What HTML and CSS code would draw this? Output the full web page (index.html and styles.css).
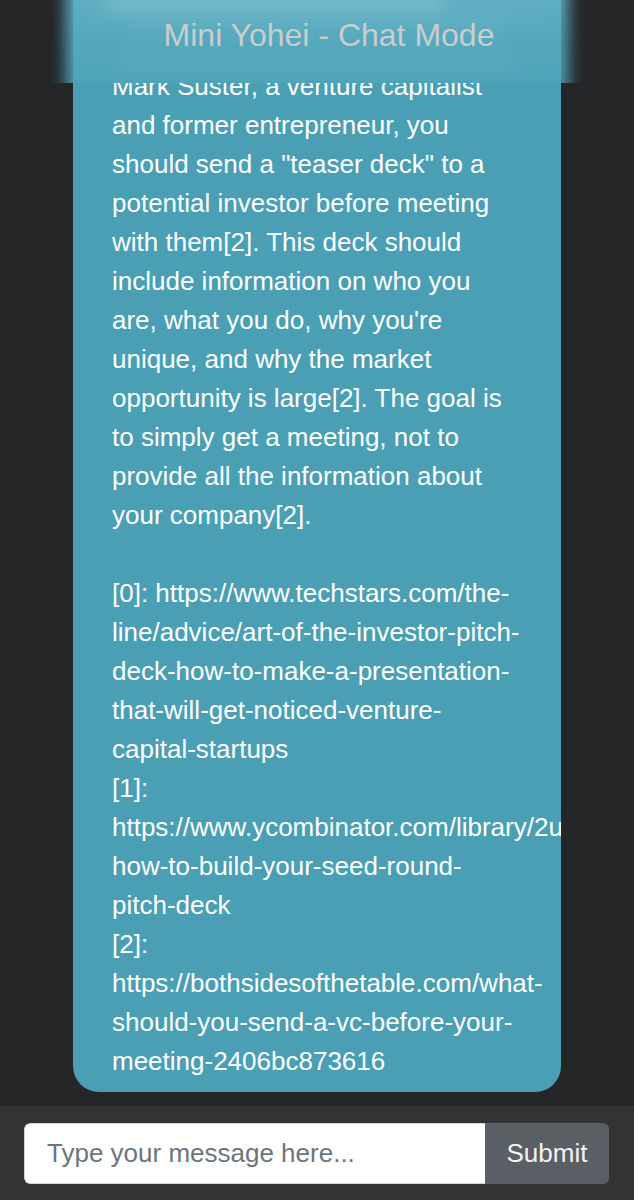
FILE: index.html
```html
<!DOCTYPE html>
<html lang="en">
<head>
<meta charset="utf-8">
<title>Mini Yohei - Chat Mode</title>
<link rel="stylesheet" href="styles.css">
</head>
<body>
<div class="app">
  <main class="chat">
    <div class="bubble"><div class="msg">Here are some tips for creating
a pitch deck for investors.
According to a blog post by
Mark Suster, a venture capitalist
and former entrepreneur, you
should send a "teaser deck" to a
potential investor before meeting
with them[2]. This deck should
include information on who you
are, what you do, why you're
unique, and why the market
opportunity is large[2]. The goal is
to simply get a meeting, not to
provide all the information about
your company[2].

[0]: https://www.techstars.com/the-
line/advice/art-of-the-investor-pitch-
deck-how-to-make-a-presentation-
that-will-get-noticed-venture-
capital-startups
[1]:
https://www.ycombinator.com/library/2u-
how-to-build-your-seed-round-
pitch-deck
[2]:
https://bothsidesofthetable.com/what-
should-you-send-a-vc-before-your-
meeting-2406bc873616</div></div>
  </main>
  <header class="topbar">
    <div class="topbar-blur">
      <span class="ghost g1"></span>
      <span class="ghost g2"></span>
      <span class="ghost g3"></span>
    </div>
    <h1 class="title">Mini Yohei - Chat Mode</h1>
  </header>
  <footer class="composer">
    <form class="input-group">
      <input class="field" type="text" placeholder="Type your message here...">
      <button class="submit" type="button">Submit</button>
    </form>
  </footer>
</div>
</body>
</html>
```

FILE: styles.css
```css
html, body {
  margin: 0;
  padding: 0;
  height: 100%;
}
body {
  background: #252628;
  font-family: "Liberation Sans", Arial, Helvetica, sans-serif;
  color: #ffffff;
}
.app {
  position: relative;
  height: 1200px;
  display: flex;
  flex-direction: column;
  overflow: hidden;
}
.chat {
  height: 1106px;
  flex: none;
  display: flex;
  flex-direction: column;
  justify-content: flex-end;
  align-items: center;
  overflow: hidden;
}
.bubble {
  flex: none;
  width: 488px;
  box-sizing: border-box;
  margin-bottom: 14px;
  padding: 20px 0 11px 39px;
  background: #4a9fb5;
  border-radius: 26px;
  overflow: hidden;
}
.msg {
  white-space: pre;
  font-size: 26px;
  line-height: 39px;
  color: #ffffff;
}
.topbar {
  position: absolute;
  top: 0;
  left: 0;
  right: 0;
  height: 83px;
  overflow: hidden;
}
.topbar-blur {
  position: absolute;
  top: -20px;
  left: 66px;
  width: 502px;
  height: 140px;
  background: linear-gradient(180deg, #66b2c4 0%, #5eadc0 20%, #54a7bb 45%, #4fa4b9 70%, #4ba1b6 100%);
  filter: blur(8px);
}
.ghost {
  position: absolute;
  background: #86c4d2;
  border-radius: 8px;
}
.g1 { top: 14px; left: 40px; width: 340px; height: 18px; opacity: 0.55; }
.g2 { top: 40px; left: 60px; width: 380px; height: 8px; opacity: 0.25; }
.g3 { top: 76px; left: 50px; width: 400px; height: 10px; opacity: 0.25; }
.title {
  position: relative;
  margin: 0;
  padding-left: 24px;
  text-align: center;
  font-weight: normal;
  font-size: 32px;
  line-height: 70px;
  color: #c9cdce;
}
.composer {
  flex: none;
  height: 94px;
  box-sizing: border-box;
  background: #333333;
  padding: 17px 25px 16px 24px;
}
.input-group {
  display: flex;
  height: 61px;
  margin: 0;
  border-radius: 6px;
  overflow: hidden;
}
.field {
  flex: 1;
  min-width: 0;
  box-sizing: border-box;
  border: 1px solid #ced4da;
  border-right: none;
  border-radius: 6px 0 0 6px;
  padding: 0 22px;
  font-family: "Liberation Sans", Arial, Helvetica, sans-serif;
  font-size: 26px;
  color: #495057;
  background: #ffffff;
  outline: none;
}
.field::placeholder {
  color: #6c757d;
}
.submit {
  width: 124px;
  border: none;
  background: #5a5f66;
  color: #f2f2f2;
  font-family: "Liberation Sans", Arial, Helvetica, sans-serif;
  font-size: 26px;
  padding: 0;
}
```
